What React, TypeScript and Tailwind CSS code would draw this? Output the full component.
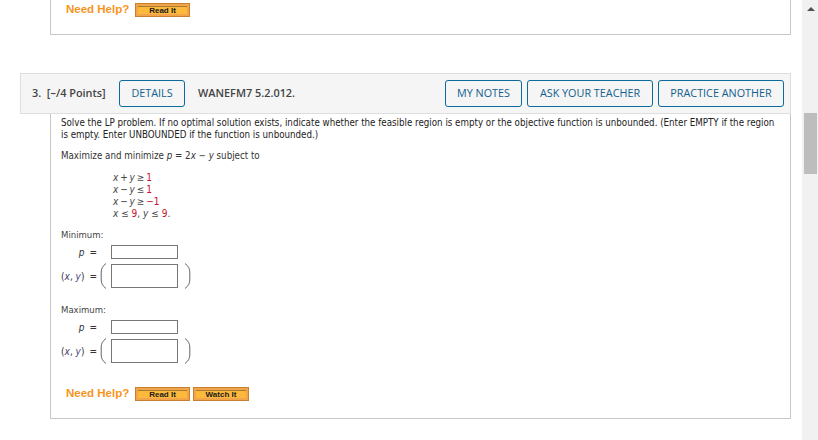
const bodyFont = "font-['DejaVu_Sans_Condensed','DejaVu_Sans',sans-serif]";

function HelpButton({ label, width }: { label: string; width: string }) {
  return (
    <div className={`${width} h-[14px] border border-[#c97f30] bg-[#f2a44a] p-[2px] flex`}>
      <div className="flex-1 bg-[#fdb93c] border-t border-[#a87b33] flex items-center justify-center font-['Liberation_Sans',sans-serif] font-bold text-[8px] leading-none text-[#1a1a1a]">
        {label}
      </div>
    </div>
  );
}

function NeedHelp({ buttons }: { buttons: { label: string; width: string }[] }) {
  return (
    <div className="flex items-center">
      <span className="w-[69px] font-['Liberation_Sans',sans-serif] font-bold text-[11.5px] leading-none text-[#f7941d]">Need Help?</span>
      <div className="flex gap-[3px]">
        {buttons.map((b) => (
          <HelpButton key={b.label} label={b.label} width={b.width} />
        ))}
      </div>
    </div>
  );
}

function OutlineButton({ label, width }: { label: string; width: string }) {
  return (
    <div className={`${width} h-[27px] border border-[#0b6a9e] rounded-[3px] flex items-center justify-center text-[10.8px] text-[#12608f] bg-[#f5f5f5]`}>
      {label}
    </div>
  );
}

function Paren({ right }: { right?: boolean }) {
  return (
    <svg width="7" height="26" viewBox="0 0 7 26" className={right ? 'scale-x-[-1]' : ''}>
      <path d="M6 0.5 C2.5 3 1.2 6 1.2 9 L1.2 17 C1.2 20 2.5 23 6 25.5" fill="none" stroke="#666" strokeWidth="1" />
    </svg>
  );
}

function AnswerBlock({ title, titleGap }: { title: string; titleGap: string }) {
  return (
    <div className={titleGap}>
      <div className="text-[9.5px] leading-[12px] text-[#444]">{title}</div>
      <div className="mt-[4px] flex items-center h-[14px]">
        <div className="w-[36px] flex justify-end text-[10px] text-[#333] whitespace-nowrap">
          <i>p</i>
          <span className="ml-[5px]">=</span>
        </div>
        <div className="ml-[14px] w-[67px] h-[14px] border border-[#777] bg-white" />
      </div>
      <div className="mt-[5px] flex items-center h-[24px] relative">
        <div className="w-[36px] flex justify-end text-[10px] text-[#333] whitespace-nowrap">
          <span>(<i className="text-[#447]">x</i>, <i className="text-[#447]">y</i>)</span>
          <span className="ml-[5px]">=</span>
        </div>
        <div className="ml-[14px] w-[67px] h-[24px] border border-[#777] bg-white" />
        <div className="absolute left-[39px] top-[-1px] flex"><Paren /></div>
        <div className="absolute left-[123px] top-[-1px] flex"><Paren right /></div>
      </div>
    </div>
  );
}

export default function App() {
  return (
    <div className="h-[440px] w-[818px] overflow-hidden bg-white flex">
      <div className="w-[802px] font-['Open_Sans',sans-serif]">
        <div className="ml-[50px] w-[741px] h-[35px] border-x border-b border-[#c8c8c8] pl-[15px] pt-[3px]">
          <NeedHelp buttons={[{ label: 'Read It', width: 'w-[55px]' }]} />
        </div>

        <div className="mt-[38px] ml-[20px] w-[771px] h-[41px] bg-[#f5f5f5] border border-[#dedede] flex items-center pl-[11px] pr-[6px]">
          <span className="w-[76px] font-semibold text-[10.9px] text-[#444] whitespace-pre">3.  [–/4 Points]</span>
          <div className="ml-[11px]"><OutlineButton label="DETAILS" width="w-[66px]" /></div>
          <span className="ml-[13px] font-semibold text-[10.9px] text-[#444]">WANEFM7 5.2.012.</span>
          <div className="ml-auto flex gap-[5px]">
            <OutlineButton label="MY NOTES" width="w-[77px]" />
            <OutlineButton label="ASK YOUR TEACHER" width="w-[126px]" />
            <OutlineButton label="PRACTICE ANOTHER" width="w-[126px]" />
          </div>
        </div>

        <div className={`ml-[50px] w-[741px] h-[305px] border-x border-b border-[#c8c8c8] pl-[10px] pt-[3px] ${bodyFont} text-[#222]`}>
          <p className="text-[9.7px] leading-[12px] w-[722px]">
            Solve the LP problem. If no optimal solution exists, indicate whether the feasible region is empty or the objective function is unbounded. (Enter EMPTY if the region is empty. Enter UNBOUNDED if the function is unbounded.)
          </p>
          <p className="mt-[9px] text-[9.7px] leading-[12px] text-[#333]">
            Maximize and minimize <i>p</i> = 2<i>x</i> − <i>y</i> subject to
          </p>
          <div className="mt-[10px] ml-[52px] text-[10px] leading-[12px] text-[#444]">
            <div className="[word-spacing:-1px]"><i>x</i> + <i>y</i> ≥ <span className="text-[#c8102e]">1</span></div>
            <div className="[word-spacing:-1px]"><i>x</i> − <i>y</i> ≤ <span className="text-[#c8102e]">1</span></div>
            <div className="[word-spacing:-1px]"><i>x</i> − <i>y</i> ≥ <span className="text-[#c8102e]">−1</span></div>
            <div><i>x</i> ≤ <span className="text-[#c8102e]">9</span>, <i>y</i> ≤ <span className="text-[#c8102e]">9</span>.</div>
          </div>
          <AnswerBlock title="Minimum:" titleGap="mt-[9px]" />
          <AnswerBlock title="Maximum:" titleGap="mt-[16px]" />
          <div className="mt-[24px] pl-[5px]">
            <NeedHelp buttons={[{ label: 'Read It', width: 'w-[55px]' }, { label: 'Watch It', width: 'w-[56px]' }]} />
          </div>
        </div>
      </div>

      <div className="w-[16px] h-full bg-[#f1f1f1] relative">
        <div className="absolute left-[5px] top-[7px] w-0 h-0 border-x-[4px] border-x-transparent border-b-[4px] border-b-[#505050]" />
        <div className="absolute left-[2px] top-[113px] w-[13px] h-[61px] bg-[#bdbdbd]" />
      </div>
    </div>
  );
}
